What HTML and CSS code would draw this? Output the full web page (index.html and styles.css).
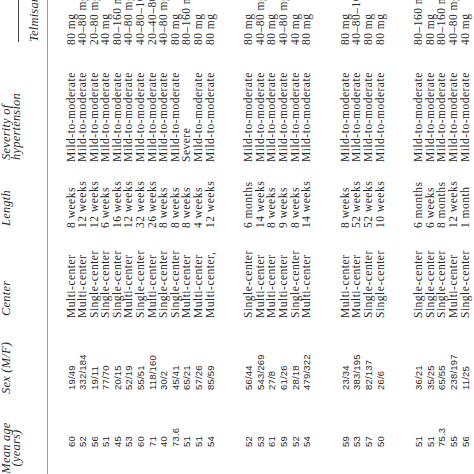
FILE: index.html
```html
<!DOCTYPE html>
<html>
<head>
<meta charset="utf-8">
<link rel="stylesheet" href="styles.css">
</head>
<body>
<div class="frame">
  <div class="page">
    <div class="head">
      <div class="hcell hc-age"><span>Mean age</span><span>(years)</span></div>
      <div class="hcell">Sex (M/F)</div>
      <div class="hcell">Center</div>
      <div class="hcell">Length</div>
      <div class="hcell">Severity of<br>hypertension</div>
      <div class="hcell hc-drug"><div class="spanner"></div><div class="sub">Telmisartan</div></div>
    </div>
    <div class="body">
      <div class="group">
        <div class="row"><span class="num">60</span><span class="num">19/49</span><span>Multi-center</span><span>8 weeks</span><span>Mild-to-moderate</span><span>80 mg</span></div>
        <div class="row"><span class="num">52</span><span class="num">332/184</span><span>Multi-center</span><span>12 weeks</span><span>Mild-to-moderate</span><span>40–80 mg</span></div>
        <div class="row"><span class="num">56</span><span class="num">19/11</span><span>Single-center</span><span>12 weeks</span><span>Mild-to-moderate</span><span>20–80 mg</span></div>
        <div class="row"><span class="num">51</span><span class="num">77/70</span><span>Single-center</span><span>6 weeks</span><span>Mild-to-moderate</span><span>40 mg</span></div>
        <div class="row"><span class="num">45</span><span class="num">20/15</span><span>Single-center</span><span>16 weeks</span><span>Mild-to-moderate</span><span>80–160 mg</span></div>
        <div class="row"><span class="num">53</span><span class="num">52/19</span><span>Multi-center</span><span>12 weeks</span><span>Mild-to-moderate</span><span>40–80 mg</span></div>
        <div class="row"><span class="num">60</span><span class="num">55/51</span><span>Single-center</span><span>32 weeks</span><span>Mild-to-moderate</span><span>40–80–160 mg</span></div>
        <div class="row"><span class="num">71</span><span class="num">118/160</span><span>Multi-center</span><span>26 weeks</span><span>Mild-to-moderate</span><span>20–40–80 mg</span></div>
        <div class="row"><span class="num">40</span><span class="num">30/2</span><span>Single-center</span><span>8 weeks</span><span>Mild-to-moderate</span><span>40–80 mg</span></div>
        <div class="row"><span class="num">73.6</span><span class="num">45/41</span><span>Single-center</span><span>8 weeks</span><span>Mild-to-moderate</span><span>80 mg</span></div>
        <div class="row"><span class="num">51</span><span class="num">65/21</span><span>Multi-center</span><span>8 weeks</span><span>Severe</span><span>80–160 mg</span></div>
        <div class="row"><span class="num">51</span><span class="num">57/26</span><span>Multi-center</span><span>4 weeks</span><span>Mild-to-moderate</span><span>80 mg</span></div>
        <div class="row"><span class="num">54</span><span class="num">85/59</span><span>Multi-center,</span><span>12 weeks</span><span>Mild-to-moderate</span><span>80 mg</span></div>
      </div>
      <div class="group">
        <div class="row"><span class="num">52</span><span class="num">56/44</span><span>Single-center</span><span>6 months</span><span>Mild-to-moderate</span><span>80 mg</span></div>
        <div class="row"><span class="num">53</span><span class="num">543/269</span><span>Multi-center</span><span>14 weeks</span><span>Mild-to-moderate</span><span>40–80 mg</span></div>
        <div class="row"><span class="num">61</span><span class="num">27/8</span><span>Multi-center</span><span>8 weeks</span><span>Mild-to-moderate</span><span>80 mg</span></div>
        <div class="row"><span class="num">59</span><span class="num">61/26</span><span>Multi-center</span><span>9 weeks</span><span>Mild-to-moderate</span><span>40–80 mg</span></div>
        <div class="row"><span class="num">52</span><span class="num">28/18</span><span>Single-center</span><span>8 weeks</span><span>Mild-to-moderate</span><span>40 mg</span></div>
        <div class="row"><span class="num">54</span><span class="num">479/322</span><span>Multi-center</span><span>14 weeks</span><span>Mild-to-moderate</span><span>80 mg</span></div>
      </div>
      <div class="group">
        <div class="row"><span class="num">59</span><span class="num">23/34</span><span>Multi-center</span><span>8 weeks</span><span>Mild-to-moderate</span><span>80 mg</span></div>
        <div class="row"><span class="num">53</span><span class="num">383/195</span><span>Multi-center</span><span>52 weeks</span><span>Mild-to-moderate</span><span>40–80–160 mg</span></div>
        <div class="row"><span class="num">57</span><span class="num">82/137</span><span>Single-center</span><span>52 weeks</span><span>Mild-to-moderate</span><span>80 mg</span></div>
        <div class="row"><span class="num">50</span><span class="num">26/6</span><span>Single-center</span><span>10 weeks</span><span>Mild-to-moderate</span><span>80 mg</span></div>
      </div>
      <div class="group">
        <div class="row"><span class="num">51</span><span class="num">36/21</span><span>Single-center</span><span>6 months</span><span>Mild-to-moderate</span><span>80–160 mg</span></div>
        <div class="row"><span class="num">51</span><span class="num">35/25</span><span>Single-center</span><span>6 weeks</span><span>Mild-to-moderate</span><span>80 mg</span></div>
        <div class="row"><span class="num">75.3</span><span class="num">65/55</span><span>Single-center</span><span>8 months</span><span>Mild-to-moderate</span><span>80–160 mg</span></div>
        <div class="row"><span class="num">55</span><span class="num">238/197</span><span>Multi-center</span><span>12 weeks</span><span>Mild-to-moderate</span><span>40–80 mg</span></div>
        <div class="row"><span class="num">56</span><span class="num">11/25</span><span>Single-center</span><span>1 month</span><span>Mild-to-moderate</span><span>40 mg</span></div>
      </div>
    </div>
  </div>
</div>
</body>
</html>
```

FILE: styles.css
```css
html, body {
  margin: 0;
  padding: 0;
  background: #fff;
}
.frame {
  width: 474px;
  height: 474px;
  overflow: hidden;
  position: relative;
}
.page {
  width: 474px;
  height: 474px;
  transform: rotate(-90deg);
  transform-origin: 237px 237px;
  font-family: "Liberation Serif", "Times New Roman", serif;
  font-size: 11.5px;
  letter-spacing: 0.5px;
  color: #2a2a2a;
  white-space: nowrap;
}
.head {
  display: grid;
  grid-template-columns: 82px 78px 90px 66px 118px 200px;
  margin-left: -2px;
  height: 46.5px;
  border-bottom: 1.5px solid #9a9a9a;
  font-style: italic;
  font-size: 12.5px;
  letter-spacing: 0.2px;
  line-height: 10px;
  width: 476px;
}
.hcell {
  padding-top: 1px;
}
.hc-age {
  display: flex;
  flex-direction: column;
  align-items: center;
  width: 56px;
}
.hc-drug {
  padding-top: 0;
}
.spanner {
  height: 18px;
  border-bottom: 1px solid #444;
  width: 120px;
}
.sub {
  margin-top: 10px;
}
.body {
  padding-top: 18px;
}
.group + .group {
  margin-top: 27px;
}
.row {
  display: grid;
  grid-template-columns: 57px 72px 90px 66px 117px 200px;
  padding-left: 27px;
  height: 11.6px;
  line-height: 11.6px;
}
.num {
  font-family: "Liberation Sans", Arial, sans-serif;
  font-size: 9.5px;
  letter-spacing: 0.2px;
}
```
